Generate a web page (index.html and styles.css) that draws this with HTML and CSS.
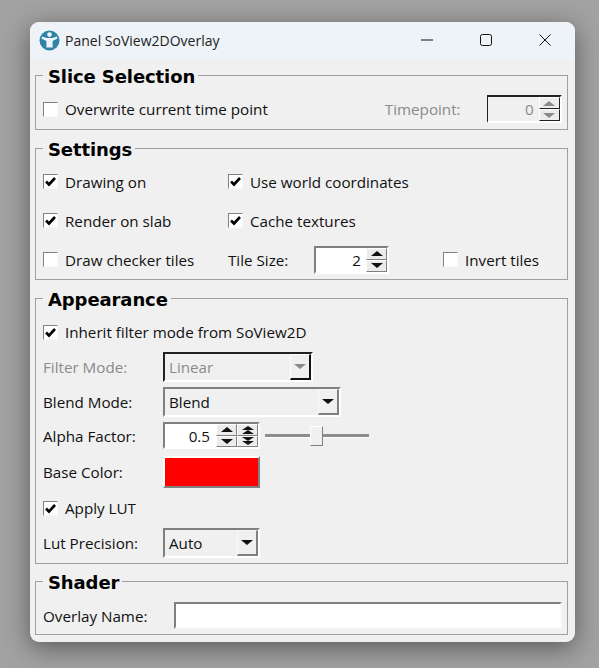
FILE: index.html
```html
<!DOCTYPE html>
<html lang="en">

<head>
    <meta charset="UTF-8">
    <meta name="viewport" content="width=device-width, initial-scale=1.0">
    <link rel="stylesheet" href="styles.css">
    <title>Panel SoView2DOverlay</title>
</head>

<body>
    <svg class="defs" width="0" height="0">
        <symbol id="tick" viewBox="0 0 11 11">
            <path d="M1 5.5 L4 8.5 L10 2" fill="none" stroke="#000" stroke-width="2.6" />
        </symbol>
    </svg>

    <div class="window">
        <header class="titlebar">
            <svg class="app-icon" width="21" height="21" viewBox="0 0 21 21">
                <circle cx="10.5" cy="10.5" r="10" fill="#2f84a6" />
                <circle cx="10.5" cy="4.6" r="2.3" fill="#eef3f8" />
                <path d="M3 6.5 L7.5 8 H13.5 L18 6.5 L18.5 8.5 L13.6 11 V17.5 H7.4 V11 L2.5 8.5 Z" fill="#eef3f8" />
            </svg>
            <span class="title">Panel SoView2DOverlay</span>
            <div class="controls">
                <button class="control">
                    <svg width="14" height="14" viewBox="0 0 14 14"><path d="M1 7 H13" stroke="#111" fill="none" /></svg>
                </button>
                <button class="control">
                    <svg width="14" height="14" viewBox="0 0 14 14"><rect x="1.5" y="1.5" width="11" height="11" rx="2" stroke="#111" fill="none" /></svg>
                </button>
                <button class="control">
                    <svg width="14" height="14" viewBox="0 0 14 14"><path d="M1.5 1.5 L12.5 12.5 M12.5 1.5 L1.5 12.5" stroke="#111" fill="none" /></svg>
                </button>
            </div>
        </header>

        <div class="panel">
            <fieldset class="group group-slice">
                <legend>Slice Selection</legend>
                <div class="row row-slice">
                    <label class="check"><span class="box"></span>Overwrite current time point</label>
                    <span class="label-disabled timepoint-label">Timepoint:</span>
                    <div class="spin spin-disabled timepoint-spin">
                        <span class="spin-value">0</span>
                        <div class="spin-btns">
                            <span class="spin-btn"><i class="arrow-up"></i></span>
                            <span class="spin-btn"><i class="arrow-down"></i></span>
                        </div>
                    </div>
                </div>
            </fieldset>

            <fieldset class="group group-settings">
                <legend>Settings</legend>
                <div class="row row-settings">
                    <label class="check col-first"><span class="box"><svg width="11" height="11"><use href="#tick" /></svg></span>Drawing on</label>
                    <label class="check"><span class="box"><svg width="11" height="11"><use href="#tick" /></svg></span>Use world coordinates</label>
                </div>
                <div class="row row-settings">
                    <label class="check col-first"><span class="box"><svg width="11" height="11"><use href="#tick" /></svg></span>Render on slab</label>
                    <label class="check"><span class="box"><svg width="11" height="11"><use href="#tick" /></svg></span>Cache textures</label>
                </div>
                <div class="row row-settings">
                    <label class="check col-first"><span class="box"></span>Draw checker tiles</label>
                    <span class="tile-label">Tile Size:</span>
                    <div class="spin tile-spin">
                        <span class="spin-value">2</span>
                        <div class="spin-btns">
                            <span class="spin-btn"><i class="arrow-up"></i></span>
                            <span class="spin-btn"><i class="arrow-down"></i></span>
                        </div>
                    </div>
                    <label class="check invert"><span class="box"></span>Invert tiles</label>
                </div>
            </fieldset>

            <fieldset class="group group-appearance">
                <legend>Appearance</legend>
                <div class="row row-check">
                    <label class="check"><span class="box"><svg width="11" height="11"><use href="#tick" /></svg></span>Inherit filter mode from SoView2D</label>
                </div>
                <div class="row">
                    <span class="field-label label-disabled">Filter Mode:</span>
                    <div class="combo combo-disabled combo-filter">
                        <span class="combo-value">Linear</span>
                        <span class="combo-btn"><i class="arrow-down"></i></span>
                    </div>
                </div>
                <div class="row">
                    <span class="field-label">Blend Mode:</span>
                    <div class="combo combo-blend">
                        <span class="combo-value">Blend</span>
                        <span class="combo-btn"><i class="arrow-down"></i></span>
                    </div>
                </div>
                <div class="row">
                    <span class="field-label">Alpha Factor:</span>
                    <div class="spin alpha-spin">
                        <span class="spin-value">0.5</span>
                        <div class="spin-btns">
                            <span class="spin-btn"><i class="arrow-up"></i></span>
                            <span class="spin-btn"><i class="arrow-down"></i></span>
                        </div>
                        <div class="spin-btns">
                            <span class="spin-btn spin-btn-double"><i class="arrow-up"></i><i class="arrow-up"></i></span>
                            <span class="spin-btn spin-btn-double"><i class="arrow-down"></i><i class="arrow-down"></i></span>
                        </div>
                    </div>
                    <div class="slider">
                        <span class="track track-left"></span>
                        <span class="thumb"></span>
                        <span class="track track-right"></span>
                    </div>
                </div>
                <div class="row row-color">
                    <span class="field-label">Base Color:</span>
                    <button class="color-btn"></button>
                </div>
                <div class="row row-check">
                    <label class="check"><span class="box"><svg width="11" height="11"><use href="#tick" /></svg></span>Apply LUT</label>
                </div>
                <div class="row">
                    <span class="field-label">Lut Precision:</span>
                    <div class="combo combo-lut">
                        <span class="combo-value">Auto</span>
                        <span class="combo-btn"><i class="arrow-down"></i></span>
                    </div>
                </div>
            </fieldset>

            <fieldset class="group group-shader">
                <legend>Shader</legend>
                <div class="row">
                    <span class="overlay-label">Overlay Name:</span>
                    <input class="overlay-input" type="text">
                </div>
            </fieldset>
        </div>
    </div>
</body>

</html>
```

FILE: styles.css
```css
html, body {
    height: 100%;
}

body {
    margin: 0;
    padding: 22px 0 0 30px;
    box-sizing: border-box;
    overflow: hidden;
    background-color: #a2a2a2;
    font-family: "Open Sans", "Noto Sans", sans-serif;
    font-size: 15.2px;
    color: #111;
}

.defs {
    position: absolute;
}

.window {
    width: 545px;
    height: 620px;
    background-color: #f0f0f0;
    border-radius: 9px;
    overflow: hidden;
    box-shadow: 0 6px 26px rgba(0, 0, 0, 0.45);
}

.titlebar {
    display: flex;
    align-items: center;
    height: 37px;
    padding-left: 9px;
    background-color: #eef3f8;
}

.app-icon {
    margin-right: 5px;
}

.title {
    font-size: 14px;
    color: #222;
}

.controls {
    display: flex;
    align-self: flex-start;
    margin-left: auto;
    margin-right: 1px;
}

.control {
    display: flex;
    align-items: center;
    justify-content: center;
    width: 59px;
    height: 36px;
    padding: 0;
    border: none;
    background: none;
}

.panel {
    padding: 4px 7px 0 5px;
}

.group {
    margin: 0 0 6px;
    padding: 0 0 0 7px;
    min-width: 0;
    border: 1px solid #a0a0a0;
}

.group legend {
    margin-left: 0;
    padding: 4px 3px 0 5px;
    font-family: "DejaVu Sans", sans-serif;
    font-size: 18px;
    font-weight: bold;
    letter-spacing: -0.1px;
    line-height: 20px;
    color: #000;
}

.row {
    display: flex;
    align-items: center;
}

.group-slice {
    padding-top: 3px;
    padding-bottom: 1px;
}

.row-slice {
    height: 38px;
}

.group-settings {
    padding-top: 2px;
}

.row-settings {
    height: 39px;
}

.group-appearance {
    display: flex;
    flex-direction: column;
    gap: 5px;
    margin-bottom: 5px;
    padding-top: 7px;
    padding-bottom: 5px;
}

.row-check {
    height: 30px;
}

.row-color {
    margin-top: 2px;
}

.group-shader {
    padding-top: 9px;
    padding-bottom: 5px;
}

.check {
    display: flex;
    align-items: center;
    white-space: nowrap;
}

.box {
    display: flex;
    align-items: center;
    justify-content: center;
    flex: none;
    box-sizing: border-box;
    width: 15px;
    height: 15px;
    margin-right: 7px;
    border: 1px solid;
    border-color: #808080 #f8f8f8 #f8f8f8 #808080;
    background-color: #fff;
}

.col-first {
    width: 185px;
}

.label-disabled {
    color: #8a8a8a;
}

.timepoint-label {
    margin-left: 117px;
}

.timepoint-spin {
    margin-left: 26px;
}

.tile-label {
    width: 86px;
}

.invert {
    margin-left: 54px;
}

/* spin boxes */
.spin {
    display: flex;
    align-items: stretch;
    box-sizing: border-box;
    height: 28px;
    border: 2px solid;
    border-color: #808080 #fff #fff #808080;
    background-color: #fff;
}

.timepoint-spin {
    width: 75px;
}

.tile-spin {
    width: 75px;
}

.alpha-spin {
    width: 97px;
    height: 27px;
}

.alpha-spin .spin-value {
    padding-right: 6px;
}

.spin-disabled {
    border-color: #222 #fff #fff #222;
    border-left-width: 1px;
    background-color: #f0f0f0;
    color: #8a8a8a;
}

.spin-value {
    flex: 1;
    padding-right: 5px;
    line-height: 24px;
    text-align: right;
}

.spin-btns {
    display: flex;
    flex-direction: column;
    width: 21px;
}

.spin-btn {
    display: flex;
    flex: 1;
    flex-direction: column;
    align-items: center;
    justify-content: center;
    border: 1px solid;
    border-color: #fff #808080 #808080 #fff;
    background-color: #ececec;
}

.spin-disabled .spin-btn {
    border-color: #fff #222 #222 #fff;
}

.spin-disabled .spin-btn i {
    border-top-color: #8a8a8a;
    border-bottom-color: #8a8a8a;
}

.spin-btn-double i {
    border-top-width: 4px;
    border-bottom-width: 4px;
}

.arrow-up,
.arrow-down {
    display: block;
    width: 0;
    height: 0;
    border-left: 6px solid transparent;
    border-right: 6px solid transparent;
}

.arrow-up {
    border-bottom: 5px solid #111;
}

.arrow-down {
    border-top: 5px solid #111;
}

/* combo boxes */
.field-label {
    flex: none;
    width: 120px;
}

.combo {
    display: flex;
    align-items: stretch;
    box-sizing: border-box;
    height: 30px;
    border: 2px solid;
    border-color: #808080 #fff #fff #808080;
    background-color: #f0f0f0;
}

.combo-filter {
    width: 150px;
    border-color: #222 #fff #fff #222;
}

.combo-blend {
    width: 178px;
}

.combo-lut {
    width: 97px;
}

.combo-value {
    flex: 1;
    padding-left: 4px;
    line-height: 26px;
}

.combo-btn {
    display: flex;
    align-items: center;
    justify-content: center;
    width: 18px;
    border-top: 1px solid #f8f8f8;
    border-left: 1px solid #f8f8f8;
    border-right: 2px solid #808080;
    border-bottom: 2px solid #808080;
}

.combo-disabled {
    color: #8a8a8a;
}

.combo-disabled .combo-btn {
    border-color: #fff #111 #111 #fff;
}

.combo-disabled .arrow-down {
    border-top-color: #8a8a8a;
}

/* slider */
.slider {
    display: flex;
    align-items: center;
    width: 104px;
    margin-left: 5px;
}

.track {
    height: 3px;
    background-color: #8c8c8c;
    border-bottom: 1px solid #fff;
}

.track-left {
    width: 45px;
}

.track-right {
    flex: 1;
}

.thumb {
    box-sizing: border-box;
    width: 13px;
    height: 20px;
    background-color: #f0f0f0;
    border: 1px solid;
    border-color: #fff #808080 #808080 #fff;
}

.color-btn {
    box-sizing: border-box;
    width: 97px;
    height: 32px;
    padding: 0;
    border: 2px solid;
    border-color: #fff #808080 #808080 #fff;
    background-color: #f00;
}

.overlay-label {
    width: 131px;
    flex: none;
}

.overlay-input {
    box-sizing: border-box;
    width: 388px;
    height: 27px;
    padding: 0;
    border: 2px solid;
    border-color: #808080 #f8f8f8 #f8f8f8 #808080;
    background-color: #fff;
}
```
